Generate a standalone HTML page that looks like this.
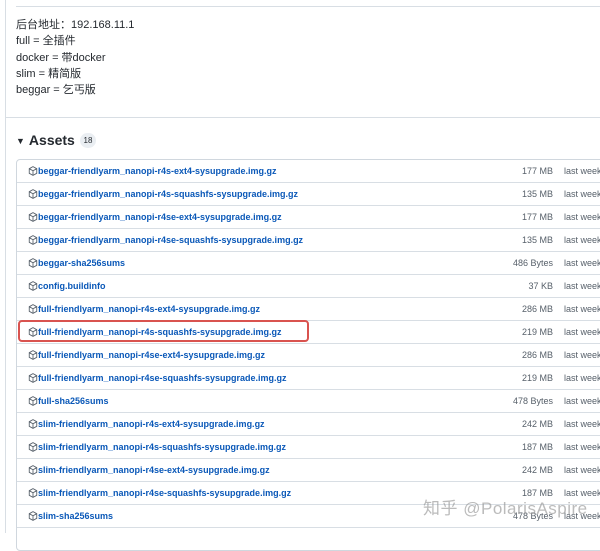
<!DOCTYPE html>
<html><head><meta charset="utf-8"><style>
*{margin:0;padding:0;box-sizing:border-box}
body{width:600px;height:533px;overflow:hidden;background:#fff;font-family:"Liberation Sans","Noto Sans CJK SC",sans-serif;position:relative;color:#24292f}
.vl{position:absolute;left:5px;top:0;width:1px;height:533px;background:#d8dee4}
.hl{position:absolute;left:16px;width:600px;height:1px;background:#d8dee4}
.txt{position:absolute;left:16px;top:17px;font-size:11px;line-height:16.3px}
.h{position:absolute;left:16px;top:132px;font-size:14px;font-weight:600}
.h span.tri{font-size:9px;margin-right:4px;position:relative;top:-1px}
.badge{position:absolute;left:80px;top:133px;width:16px;height:15px;border-radius:8px;background:#eaeef2;font-size:8px;text-align:center;line-height:15px;color:#24292f}
.tbl{position:absolute;left:16px;top:159px;width:600px;border:1px solid #d0d7de;border-radius:4px}
.row{height:23px;border-top:1px solid #d8dee4;position:relative;font-size:9px}
.row:first-child{border-top:none;height:22px}
.n{position:absolute;left:11px;top:6px;color:#0a58b8;font-weight:600;white-space:nowrap}
.n svg{vertical-align:-2px;margin-right:0}
.s{position:absolute;right:62px;top:6px;color:#57606a;width:80px;text-align:right}
.d{position:absolute;left:547px;top:6px;color:#57606a;white-space:nowrap}
.red{position:absolute;left:18px;top:320px;width:291px;height:22px;border:2px solid #d9534f;border-radius:4px}
.wm{position:absolute;left:423px;top:494px;font-size:17px;color:rgba(150,150,150,.65);letter-spacing:.5px;white-space:nowrap}
</style></head><body>
<div class="vl"></div>
<div class="hl" style="top:6px"></div>
<div class="txt">后台地址：192.168.11.1<br>full = 全插件<br>docker = 带docker<br>slim = 精简版<br>beggar = 乞丐版</div>
<div class="hl" style="top:117px;left:6px"></div>
<div class="h"><span class="tri">▼</span>Assets</div>
<div class="badge">18</div>
<div class="tbl">
<div class="row"><div class="n"><svg width="10" height="10" viewBox="0 0 16 16"><path d="M8 1l6 3.3v7.4L8 15l-6-3.3V4.3z M2 4.3L8 7.6l6-3.3 M8 7.6V15" fill="none" stroke="#57606a" stroke-width="1.4"/></svg>beggar-friendlyarm_nanopi-r4s-ext4-sysupgrade.img.gz</div><div class="s">177 MB</div><div class="d">last week</div></div>
<div class="row"><div class="n"><svg width="10" height="10" viewBox="0 0 16 16"><path d="M8 1l6 3.3v7.4L8 15l-6-3.3V4.3z M2 4.3L8 7.6l6-3.3 M8 7.6V15" fill="none" stroke="#57606a" stroke-width="1.4"/></svg>beggar-friendlyarm_nanopi-r4s-squashfs-sysupgrade.img.gz</div><div class="s">135 MB</div><div class="d">last week</div></div>
<div class="row"><div class="n"><svg width="10" height="10" viewBox="0 0 16 16"><path d="M8 1l6 3.3v7.4L8 15l-6-3.3V4.3z M2 4.3L8 7.6l6-3.3 M8 7.6V15" fill="none" stroke="#57606a" stroke-width="1.4"/></svg>beggar-friendlyarm_nanopi-r4se-ext4-sysupgrade.img.gz</div><div class="s">177 MB</div><div class="d">last week</div></div>
<div class="row"><div class="n"><svg width="10" height="10" viewBox="0 0 16 16"><path d="M8 1l6 3.3v7.4L8 15l-6-3.3V4.3z M2 4.3L8 7.6l6-3.3 M8 7.6V15" fill="none" stroke="#57606a" stroke-width="1.4"/></svg>beggar-friendlyarm_nanopi-r4se-squashfs-sysupgrade.img.gz</div><div class="s">135 MB</div><div class="d">last week</div></div>
<div class="row"><div class="n"><svg width="10" height="10" viewBox="0 0 16 16"><path d="M8 1l6 3.3v7.4L8 15l-6-3.3V4.3z M2 4.3L8 7.6l6-3.3 M8 7.6V15" fill="none" stroke="#57606a" stroke-width="1.4"/></svg>beggar-sha256sums</div><div class="s">486 Bytes</div><div class="d">last week</div></div>
<div class="row"><div class="n"><svg width="10" height="10" viewBox="0 0 16 16"><path d="M8 1l6 3.3v7.4L8 15l-6-3.3V4.3z M2 4.3L8 7.6l6-3.3 M8 7.6V15" fill="none" stroke="#57606a" stroke-width="1.4"/></svg>config.buildinfo</div><div class="s">37 KB</div><div class="d">last week</div></div>
<div class="row"><div class="n"><svg width="10" height="10" viewBox="0 0 16 16"><path d="M8 1l6 3.3v7.4L8 15l-6-3.3V4.3z M2 4.3L8 7.6l6-3.3 M8 7.6V15" fill="none" stroke="#57606a" stroke-width="1.4"/></svg>full-friendlyarm_nanopi-r4s-ext4-sysupgrade.img.gz</div><div class="s">286 MB</div><div class="d">last week</div></div>
<div class="row"><div class="n"><svg width="10" height="10" viewBox="0 0 16 16"><path d="M8 1l6 3.3v7.4L8 15l-6-3.3V4.3z M2 4.3L8 7.6l6-3.3 M8 7.6V15" fill="none" stroke="#57606a" stroke-width="1.4"/></svg>full-friendlyarm_nanopi-r4s-squashfs-sysupgrade.img.gz</div><div class="s">219 MB</div><div class="d">last week</div></div>
<div class="row"><div class="n"><svg width="10" height="10" viewBox="0 0 16 16"><path d="M8 1l6 3.3v7.4L8 15l-6-3.3V4.3z M2 4.3L8 7.6l6-3.3 M8 7.6V15" fill="none" stroke="#57606a" stroke-width="1.4"/></svg>full-friendlyarm_nanopi-r4se-ext4-sysupgrade.img.gz</div><div class="s">286 MB</div><div class="d">last week</div></div>
<div class="row"><div class="n"><svg width="10" height="10" viewBox="0 0 16 16"><path d="M8 1l6 3.3v7.4L8 15l-6-3.3V4.3z M2 4.3L8 7.6l6-3.3 M8 7.6V15" fill="none" stroke="#57606a" stroke-width="1.4"/></svg>full-friendlyarm_nanopi-r4se-squashfs-sysupgrade.img.gz</div><div class="s">219 MB</div><div class="d">last week</div></div>
<div class="row"><div class="n"><svg width="10" height="10" viewBox="0 0 16 16"><path d="M8 1l6 3.3v7.4L8 15l-6-3.3V4.3z M2 4.3L8 7.6l6-3.3 M8 7.6V15" fill="none" stroke="#57606a" stroke-width="1.4"/></svg>full-sha256sums</div><div class="s">478 Bytes</div><div class="d">last week</div></div>
<div class="row"><div class="n"><svg width="10" height="10" viewBox="0 0 16 16"><path d="M8 1l6 3.3v7.4L8 15l-6-3.3V4.3z M2 4.3L8 7.6l6-3.3 M8 7.6V15" fill="none" stroke="#57606a" stroke-width="1.4"/></svg>slim-friendlyarm_nanopi-r4s-ext4-sysupgrade.img.gz</div><div class="s">242 MB</div><div class="d">last week</div></div>
<div class="row"><div class="n"><svg width="10" height="10" viewBox="0 0 16 16"><path d="M8 1l6 3.3v7.4L8 15l-6-3.3V4.3z M2 4.3L8 7.6l6-3.3 M8 7.6V15" fill="none" stroke="#57606a" stroke-width="1.4"/></svg>slim-friendlyarm_nanopi-r4s-squashfs-sysupgrade.img.gz</div><div class="s">187 MB</div><div class="d">last week</div></div>
<div class="row"><div class="n"><svg width="10" height="10" viewBox="0 0 16 16"><path d="M8 1l6 3.3v7.4L8 15l-6-3.3V4.3z M2 4.3L8 7.6l6-3.3 M8 7.6V15" fill="none" stroke="#57606a" stroke-width="1.4"/></svg>slim-friendlyarm_nanopi-r4se-ext4-sysupgrade.img.gz</div><div class="s">242 MB</div><div class="d">last week</div></div>
<div class="row"><div class="n"><svg width="10" height="10" viewBox="0 0 16 16"><path d="M8 1l6 3.3v7.4L8 15l-6-3.3V4.3z M2 4.3L8 7.6l6-3.3 M8 7.6V15" fill="none" stroke="#57606a" stroke-width="1.4"/></svg>slim-friendlyarm_nanopi-r4se-squashfs-sysupgrade.img.gz</div><div class="s">187 MB</div><div class="d">last week</div></div>
<div class="row"><div class="n"><svg width="10" height="10" viewBox="0 0 16 16"><path d="M8 1l6 3.3v7.4L8 15l-6-3.3V4.3z M2 4.3L8 7.6l6-3.3 M8 7.6V15" fill="none" stroke="#57606a" stroke-width="1.4"/></svg>slim-sha256sums</div><div class="s">478 Bytes</div><div class="d">last week</div></div>
<div class="row"></div>
</div>
<div class="red"></div>
<div class="wm">知乎 @PolarisAspire</div>
</body></html>
